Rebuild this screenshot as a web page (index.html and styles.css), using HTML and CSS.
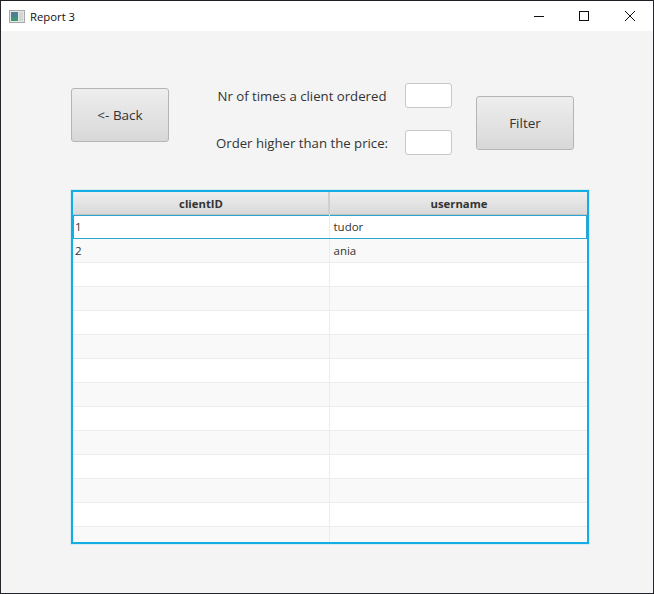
FILE: index.html
```html
<!DOCTYPE html>
<html lang="en">
<head>
    <meta charset="UTF-8">
    <meta name="viewport" content="width=device-width, initial-scale=1.0">
    <title>Report 3</title>
    <link rel="stylesheet" href="styles.css">
</head>
<body>
    <div class="window">
        <div class="titlebar">
            <svg class="app-icon" width="16" height="13" viewBox="0 0 16 13">
                <rect x="0.5" y="0.5" width="15" height="12" fill="#e6e6e6" stroke="#a9a9a9"/>
                <rect x="2" y="2" width="7" height="9" fill="#4d7f93"/>
                <rect x="2" y="7" width="7" height="4" fill="#3d9678"/>
                <rect x="10" y="2" width="4" height="9" fill="#cfd8d6"/>
            </svg>
            <span class="title">Report 3</span>
            <div class="controls">
                <svg width="14" height="14" viewBox="0 0 14 14"><path d="M1 7.5H11" stroke="#111" fill="none"/></svg>
                <svg width="14" height="14" viewBox="0 0 14 14"><rect x="1.5" y="2.5" width="9" height="9" stroke="#111" fill="none"/></svg>
                <svg width="14" height="14" viewBox="0 0 14 14"><path d="M2 2L12 12M12 2L2 12" stroke="#111" fill="none"/></svg>
            </div>
        </div>
        <div class="content">
            <div class="toolbar">
                <button class="button back">&lt;- Back</button>
                <div class="filters">
                    <label class="filter-label">Nr of times a client ordered</label>
                    <input class="field" type="text">
                    <label class="filter-label">Order higher than the price:</label>
                    <input class="field" type="text">
                </div>
                <button class="button filter">Filter</button>
            </div>
            <div class="table-box">
                <table class="table">
                    <thead>
                        <tr><th>clientID</th><th>username</th></tr>
                    </thead>
                    <tbody>
                        <tr class="selected"><td>1</td><td>tudor</td></tr>
                        <tr><td>2</td><td>ania</td></tr>
                        <tr><td></td><td></td></tr>
                        <tr><td></td><td></td></tr>
                        <tr><td></td><td></td></tr>
                        <tr><td></td><td></td></tr>
                        <tr><td></td><td></td></tr>
                        <tr><td></td><td></td></tr>
                        <tr><td></td><td></td></tr>
                        <tr><td></td><td></td></tr>
                        <tr><td></td><td></td></tr>
                        <tr><td></td><td></td></tr>
                        <tr><td></td><td></td></tr>
                        <tr><td></td><td></td></tr>
                    </tbody>
                </table>
            </div>
        </div>
    </div>
</body>
</html>
```

FILE: styles.css
```css
* {
    box-sizing: border-box;
}
body {
    margin: 0;
    font-family: "Open Sans", "Noto Sans", sans-serif;
    color: #333;
}
.window {
    width: 654px;
    height: 594px;
    display: flex;
    flex-direction: column;
    border: 1px solid #23252b;
    border-top-color: #1d1f24;
    background-color: #f4f4f4;
}
.titlebar {
    height: 30px;
    display: flex;
    align-items: center;
    padding-left: 8px;
    background-color: white;
}
.app-icon {
    margin-right: 5px;
}
.title {
    font-size: 11.3px;
    color: #111;
}
.controls {
    margin-left: auto;
    display: flex;
    gap: 31px;
    padding-right: 16px;
}
.content {
    flex: 1;
    padding: 52px 0 0 70px;
}
.toolbar {
    display: flex;
    align-items: flex-start;
}
.button {
    width: 98px;
    height: 54px;
    font-family: inherit;
    font-size: 13.5px;
    color: #333;
    border: 1px solid #b5b5b5;
    border-radius: 3px;
    background: linear-gradient(#eeeeee, #d8d8d8);
}
.back {
    margin-top: 5px;
}
.filter {
    margin-top: 13px;
    margin-left: 24px;
}
.filters {
    display: grid;
    grid-template-columns: 172px 47px;
    grid-template-rows: 25px 25px;
    column-gap: 17px;
    row-gap: 22px;
    margin-left: 47px;
    align-items: center;
}
.filter-label {
    font-size: 13.2px;
    text-align: center;
    white-space: nowrap;
}
.field {
    width: 47px;
    height: 25px;
    border: 1px solid #c8c8c8;
    border-radius: 3px;
    background-color: white;
}
.table-box {
    width: 518px;
    height: 354px;
    margin-top: 35px;
    overflow: hidden;
    border: 2px solid #12ade2;
    box-shadow: 0 0 0 1px #d9ebf2;
    background-color: white;
}
.table {
    width: 100%;
    table-layout: fixed;
    border-collapse: collapse;
    font-size: 11.5px;
}
.table th {
    height: 22px;
    padding: 2px 0 0 1px;
    font-weight: bold;
    font-size: 11.3px;
    color: #333;
    border-right: 2px solid #cfcfcf;
    border-bottom: 1px solid #c4c4c4;
    background: linear-gradient(#eeeeee, #d9d9d9);
}
.table th:first-child {
    width: 256px;
}
.table th:last-child {
    border-right: none;
}
.table td {
    height: 24px;
    padding: 0 0 0 2px;
    border-right: 1px solid #ececec;
    border-bottom: 1px solid #ececec;
}
.table td:last-child {
    padding-left: 4px;
    border-right: none;
}
.table tbody tr:nth-child(even) {
    background-color: #f9f9f9;
}
.table tr.selected td {
    border-top: 1px solid white;
    border-bottom: 1px solid #2ba6d3;
    box-shadow: inset 0 1px 0 #2ba6d3;
}
.table tr.selected td:first-child {
    box-shadow: inset 0 1px 0 #2ba6d3, inset 1px 0 0 #2ba6d3;
}
.table tr.selected td:last-child {
    box-shadow: inset 0 1px 0 #2ba6d3, inset -1px 0 0 #2ba6d3;
}
```
